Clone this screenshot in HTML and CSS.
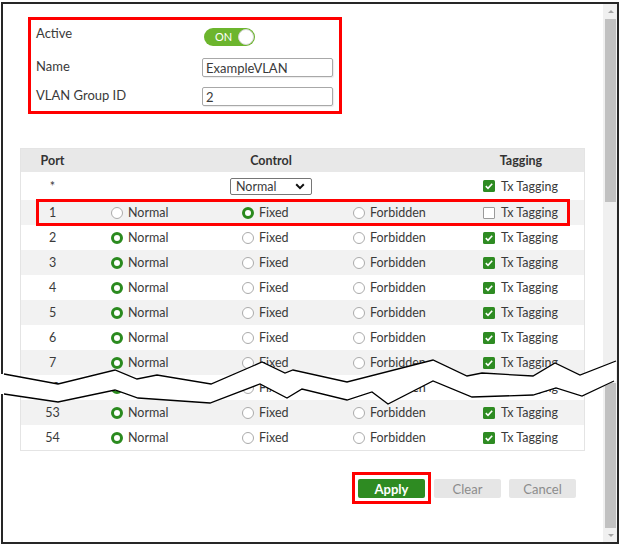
FILE: index.html
```html
<!DOCTYPE html>
<html>
<head>
<meta charset="utf-8">
<title>VLAN</title>
<link rel="stylesheet" href="styles.css">
</head>
<body>
<div class="frame">
  <div class="content">
    <div class="form-box">
      <div class="form-row row-active">
        <span class="label">Active</span>
        <span class="toggle"><span class="toggle-text">ON</span><span class="knob"></span></span>
      </div>
      <div class="form-row row-name">
        <span class="label">Name</span>
        <input class="input" type="text" value="ExampleVLAN">
      </div>
      <div class="form-row row-id">
        <span class="label">VLAN Group ID</span>
        <input class="input" type="text" value="2">
      </div>
    </div>

    <div class="table">
      <div class="thead">
        <div class="th">Port</div>
        <div class="th">Control</div>
        <div class="th">Tagging</div>
      </div>
      <div class="tr star">
        <div class="port">*</div>
        <div class="ctrl-center"><div class="select"><span>Normal</span><svg class="chev" width="10" height="7" viewBox="0 0 10 7"><path d="M1.2 1.3 L5 5.1 L8.8 1.3" fill="none" stroke="#111" stroke-width="2"/></svg></div></div>
        <div class="tag"><span class="cb on"><svg width="12" height="12" viewBox="0 0 12 12"><path d="M2.8 6.2 L5 8.3 L9.2 3.8" fill="none" stroke="#fff" stroke-width="1.6"/></svg></span><span>Tx Tagging</span></div>
      </div>
      <div class="tr alt hl">
        <div class="port">1</div>
        <div class="ctrl"><span class="opt o1"><span class="rb"></span>Normal</span><span class="opt o2"><span class="rb on"></span>Fixed</span><span class="opt"><span class="rb"></span>Forbidden</span></div>
        <div class="tag"><span class="cb"></span><span>Tx Tagging</span></div>
      </div>
      <div class="tr">
        <div class="port">2</div>
        <div class="ctrl"><span class="opt o1"><span class="rb on"></span>Normal</span><span class="opt o2"><span class="rb"></span>Fixed</span><span class="opt"><span class="rb"></span>Forbidden</span></div>
        <div class="tag"><span class="cb on"><svg width="12" height="12" viewBox="0 0 12 12"><path d="M2.8 6.2 L5 8.3 L9.2 3.8" fill="none" stroke="#fff" stroke-width="1.6"/></svg></span><span>Tx Tagging</span></div>
      </div>
      <div class="tr alt">
        <div class="port">3</div>
        <div class="ctrl"><span class="opt o1"><span class="rb on"></span>Normal</span><span class="opt o2"><span class="rb"></span>Fixed</span><span class="opt"><span class="rb"></span>Forbidden</span></div>
        <div class="tag"><span class="cb on"><svg width="12" height="12" viewBox="0 0 12 12"><path d="M2.8 6.2 L5 8.3 L9.2 3.8" fill="none" stroke="#fff" stroke-width="1.6"/></svg></span><span>Tx Tagging</span></div>
      </div>
      <div class="tr">
        <div class="port">4</div>
        <div class="ctrl"><span class="opt o1"><span class="rb on"></span>Normal</span><span class="opt o2"><span class="rb"></span>Fixed</span><span class="opt"><span class="rb"></span>Forbidden</span></div>
        <div class="tag"><span class="cb on"><svg width="12" height="12" viewBox="0 0 12 12"><path d="M2.8 6.2 L5 8.3 L9.2 3.8" fill="none" stroke="#fff" stroke-width="1.6"/></svg></span><span>Tx Tagging</span></div>
      </div>
      <div class="tr alt">
        <div class="port">5</div>
        <div class="ctrl"><span class="opt o1"><span class="rb on"></span>Normal</span><span class="opt o2"><span class="rb"></span>Fixed</span><span class="opt"><span class="rb"></span>Forbidden</span></div>
        <div class="tag"><span class="cb on"><svg width="12" height="12" viewBox="0 0 12 12"><path d="M2.8 6.2 L5 8.3 L9.2 3.8" fill="none" stroke="#fff" stroke-width="1.6"/></svg></span><span>Tx Tagging</span></div>
      </div>
      <div class="tr">
        <div class="port">6</div>
        <div class="ctrl"><span class="opt o1"><span class="rb on"></span>Normal</span><span class="opt o2"><span class="rb"></span>Fixed</span><span class="opt"><span class="rb"></span>Forbidden</span></div>
        <div class="tag"><span class="cb on"><svg width="12" height="12" viewBox="0 0 12 12"><path d="M2.8 6.2 L5 8.3 L9.2 3.8" fill="none" stroke="#fff" stroke-width="1.6"/></svg></span><span>Tx Tagging</span></div>
      </div>
      <div class="tr alt">
        <div class="port">7</div>
        <div class="ctrl"><span class="opt o1"><span class="rb on"></span>Normal</span><span class="opt o2"><span class="rb"></span>Fixed</span><span class="opt"><span class="rb"></span>Forbidden</span></div>
        <div class="tag"><span class="cb on"><svg width="12" height="12" viewBox="0 0 12 12"><path d="M2.8 6.2 L5 8.3 L9.2 3.8" fill="none" stroke="#fff" stroke-width="1.6"/></svg></span><span>Tx Tagging</span></div>
      </div>
      <div class="tr">
        <div class="port">52</div>
        <div class="ctrl"><span class="opt o1"><span class="rb on"></span>Normal</span><span class="opt o2"><span class="rb"></span>Fixed</span><span class="opt"><span class="rb"></span>Forbidden</span></div>
        <div class="tag"><span class="cb on"><svg width="12" height="12" viewBox="0 0 12 12"><path d="M2.8 6.2 L5 8.3 L9.2 3.8" fill="none" stroke="#fff" stroke-width="1.6"/></svg></span><span>Tx Tagging</span></div>
      </div>
      <div class="tr alt">
        <div class="port">53</div>
        <div class="ctrl"><span class="opt o1"><span class="rb on"></span>Normal</span><span class="opt o2"><span class="rb"></span>Fixed</span><span class="opt"><span class="rb"></span>Forbidden</span></div>
        <div class="tag"><span class="cb on"><svg width="12" height="12" viewBox="0 0 12 12"><path d="M2.8 6.2 L5 8.3 L9.2 3.8" fill="none" stroke="#fff" stroke-width="1.6"/></svg></span><span>Tx Tagging</span></div>
      </div>
      <div class="tr">
        <div class="port">54</div>
        <div class="ctrl"><span class="opt o1"><span class="rb on"></span>Normal</span><span class="opt o2"><span class="rb"></span>Fixed</span><span class="opt"><span class="rb"></span>Forbidden</span></div>
        <div class="tag"><span class="cb on"><svg width="12" height="12" viewBox="0 0 12 12"><path d="M2.8 6.2 L5 8.3 L9.2 3.8" fill="none" stroke="#fff" stroke-width="1.6"/></svg></span><span>Tx Tagging</span></div>
      </div>
    </div>

    <div class="actions">
      <div class="apply-box"><button class="btn apply">Apply</button></div>
      <button class="btn gray clear">Clear</button>
      <button class="btn gray cancel">Cancel</button>
    </div>
  </div>
  <div class="scrollbar">
    <div class="sb-arrow"><span class="tri-up"></span></div>
    <div class="thumb thumb-top"></div>
    <div class="sb-gap"></div>
    <div class="thumb thumb-bottom"></div>
    <div class="sb-arrow down"><span class="tri-down"></span></div>
  </div>
</div>

<svg class="break" width="621" height="545" viewBox="0 0 621 545">
  <polygon fill="#fff" points="0,374 4,374 58,384 115,370 137,379 157,375 211,384 262,362 285,373 293,370 347,382 433,360 467,376 482,373 533,376 555,363 580,375 616,361 616,381 582,396 556,388 533,395 472,397 433,381 388,404 372,392 347,400 302,389 287,398 260,384 210,403 138,398 115,390 58,402 4,394 0,394"/>
  <polyline fill="none" stroke="#000" stroke-width="1.3" points="4,374 58,384 115,370 137,379 157,375 211,384 262,362 285,373 293,370 347,382 433,360 467,376 482,373 533,376 555,363 580,375 616,361"/>
  <polyline fill="none" stroke="#000" stroke-width="1.3" points="4,394 58,402 115,390 138,398 210,403 260,384 287,398 302,389 347,400 372,392 388,404 433,381 472,397 533,395 556,388 582,396 614,381"/>
</svg>
</body>
</html>
```

FILE: styles.css
```css
* { box-sizing: border-box; }

html, body {
  margin: 0;
  padding: 0;
  background: #fff;
}

body {
  position: relative;
  width: 621px;
  height: 545px;
  overflow: hidden;
  font-family: Lato, "Open Sans", sans-serif;
  color: #3a3a3a;
}

.frame {
  margin: 2px 0 0 1px;
  width: 618px;
  height: 542px;
  border: 2px solid #262626;
  display: flex;
}

.content {
  flex: 1;
  display: flex;
  flex-direction: column;
  align-items: flex-start;
}

/* ---------- form ---------- */
.form-box {
  margin: 13px 0 0 25px;
  width: 314px;
  height: 97px;
  border: 3px solid #ff0000;
  padding: 8px 5px 5px 5px;
  display: flex;
  flex-direction: column;
}

.form-row {
  display: flex;
  align-items: center;
}

.row-active { height: 18px; margin-bottom: 12px; }
.row-name { height: 19px; margin-bottom: 10px; }
.row-id { height: 19px; }

.label {
  width: 166px;
  font-size: 13px;
  line-height: 15px;
  padding-bottom: 2px;
}

.row-active .label { padding-bottom: 7px; }
.row-id .label { padding-bottom: 3px; }

.toggle {
  margin-left: 2px;
  width: 51px;
  height: 18px;
  border-radius: 9px;
  background: #6cb52d;
  display: flex;
  align-items: center;
  padding-left: 11px;
}

.toggle-text {
  color: #fff;
  font-size: 11px;
  line-height: 12px;
}

.knob {
  margin-left: auto;
  margin-right: 1px;
  width: 16px;
  height: 16px;
  border-radius: 50%;
  background: #fff;
  border: 1px solid #d6d6d6;
}

.input {
  width: 131px;
  height: 19px;
  margin: 0;
  border: 1px solid #a8a8a8;
  border-radius: 2px;
  padding: 0 3px;
  font-family: Lato, "Open Sans", sans-serif;
  font-size: 13px;
  color: #3a3a3a;
  background: #fff;
  box-shadow: 1px 1px 1px rgba(0,0,0,0.08);
  outline: none;
}

/* ---------- table ---------- */
.table {
  margin: 34px 0 0 17px;
  width: 565px;
  border: 1px solid #e4e4e4;
  font-size: 12.5px;
}

.thead, .tr {
  display: grid;
  grid-template-columns: 63px 374px 1fr;
  align-items: center;
}

.thead {
  height: 23px;
  background: #e8e8e8;
  font-weight: bold;
  font-size: 12.5px;
  color: #333;
}

.th { text-align: center; }

.tr {
  height: 25px;
  background: #fff;
}

.tr.star { height: 28px; }
.tr.alt { background: #f2f2f2; }

.tr.hl { position: relative; }
.tr.hl::after {
  content: "";
  position: absolute;
  left: 15px;
  right: 14px;
  top: -1px;
  bottom: -1px;
  border: 3px solid #ff0000;
}

.port { text-align: center; }

.ctrl {
  display: flex;
  align-items: center;
  padding-left: 27px;
}

.ctrl-center {
  display: flex;
  justify-content: center;
}

.opt {
  display: flex;
  align-items: center;
  gap: 5px;
}

.o1 { width: 131px; }
.o2 { width: 111px; }

.rb {
  width: 12px;
  height: 12px;
  border-radius: 50%;
  border: 1px solid #ababab;
  background: #fff;
  flex: none;
}

.rb.on {
  border: 3.5px solid #2a8a1e;
}

.tag {
  display: flex;
  align-items: center;
  gap: 6px;
  padding-left: 25px;
}

.cb {
  width: 12px;
  height: 12px;
  border: 1px solid #9a9a9a;
  border-radius: 1px;
  background: #fff;
  flex: none;
  display: flex;
}

.cb.on {
  border: none;
  background: #2e8b22;
  border-radius: 1.5px;
}

.select {
  width: 82px;
  height: 17px;
  border: 1px solid #767676;
  border-radius: 2px;
  padding: 0 6px 0 5px;
  display: flex;
  align-items: center;
  justify-content: space-between;
  background: #fff;
}

/* ---------- actions ---------- */
.actions {
  align-self: stretch;
  margin-top: 21px;
  padding-right: 27px;
  display: flex;
  justify-content: flex-end;
  align-items: flex-start;
}

.apply-box {
  border: 3px solid #ff0000;
  padding: 4px 3px 3px 3px;
}

.btn {
  width: 67px;
  height: 19px;
  border: none;
  border-radius: 2px;
  font-family: Lato, "Open Sans", sans-serif;
  font-size: 13px;
  padding: 0;
  margin: 0;
}

.apply {
  background: #2e8b22;
  color: #fff;
  font-weight: bold;
  display: block;
}

.gray {
  background: #e6e6e6;
  color: #8c8c8c;
  margin-top: 7px;
}

.clear { margin-left: 3px; }
.cancel { margin-left: 8px; }

/* ---------- scrollbar ---------- */
.scrollbar {
  width: 14px;
  background: #f0f0f0;
  display: flex;
  flex-direction: column;
}

.sb-arrow {
  height: 15px;
  display: flex;
  justify-content: center;
  align-items: center;
  padding-left: 1px;
}

.sb-arrow.down { height: 14px; }

.tri-up {
  width: 0;
  height: 0;
  border-left: 3.5px solid transparent;
  border-right: 3.5px solid transparent;
  border-bottom: 3.5px solid #a3a3a3;
}

.tri-down {
  width: 0;
  height: 0;
  border-left: 3.5px solid transparent;
  border-right: 3.5px solid transparent;
  border-top: 3.5px solid #a3a3a3;
}

.thumb {
  margin: 0 1px 0 2px;
  background: #c1c1c1;
}

.thumb-top { height: 183px; }
.sb-gap { flex: 1; }
.thumb-bottom { height: 145px; }

/* ---------- break overlay ---------- */
.break {
  position: absolute;
  left: 0;
  top: 0;
  pointer-events: none;
}
```
